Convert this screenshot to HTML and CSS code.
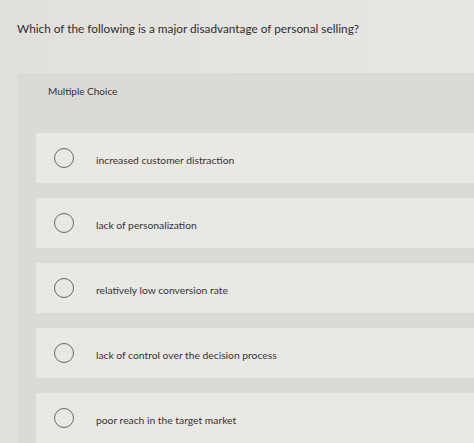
FILE: index.html
```html
<!DOCTYPE html>
<html>
<head>
<meta charset="utf-8">
<link rel="stylesheet" href="styles.css">
</head>
<body>
<div class="page">
  <h1 class="question">Which of the following is a major disadvantage of personal selling?</h1>
  <div class="panel">
    <div class="label">Multiple Choice</div>
    <div class="options">
      <div class="option"><span class="radio"></span><span class="text">increased customer distraction</span></div>
      <div class="option"><span class="radio"></span><span class="text">lack of personalization</span></div>
      <div class="option"><span class="radio"></span><span class="text">relatively low conversion rate</span></div>
      <div class="option"><span class="radio"></span><span class="text">lack of control over the decision process</span></div>
      <div class="option"><span class="radio"></span><span class="text">poor reach in the target market</span></div>
    </div>
  </div>
</div>
</body>
</html>
```
FILE: styles.css
```css
html, body {
  margin: 0;
  padding: 0;
  background: #e4e2df;
  font-family: Lato, "Liberation Sans", Arial, sans-serif;
  color: #333;
  overflow: hidden;
}
.page {
  width: 474px;
  height: 443px;
  overflow: hidden;
  padding: 21px 0 0 17px;
  box-sizing: border-box;
  background: linear-gradient(90deg, #e2e0dd 0%, #e6e4e1 60%, #e8e6e3 100%);
}
.question {
  margin: 0;
  font-size: 11.8px;
  font-weight: normal;
  line-height: 16px;
  color: #2e2e2e;
}
.panel {
  margin-top: 36px;
  background: #dcdad7;
  padding: 11px 0 20px 19px;
}
.label {
  padding-left: 12px;
  font-size: 10px;
  line-height: 14px;
  color: #333;
}
.options {
  margin-top: 35px;
  display: flex;
  flex-direction: column;
  gap: 15px;
}
.option {
  height: 50px;
  background: #eae8e5;
  display: flex;
  align-items: center;
  padding-left: 18px;
}
.radio {
  width: 18px;
  height: 18px;
  border: 1.2px solid #666;
  border-radius: 50%;
  flex: none;
}
.text {
  margin-left: 22px;
  font-size: 10.3px;
  color: #333;
  position: relative;
  top: 2px;
}
```
